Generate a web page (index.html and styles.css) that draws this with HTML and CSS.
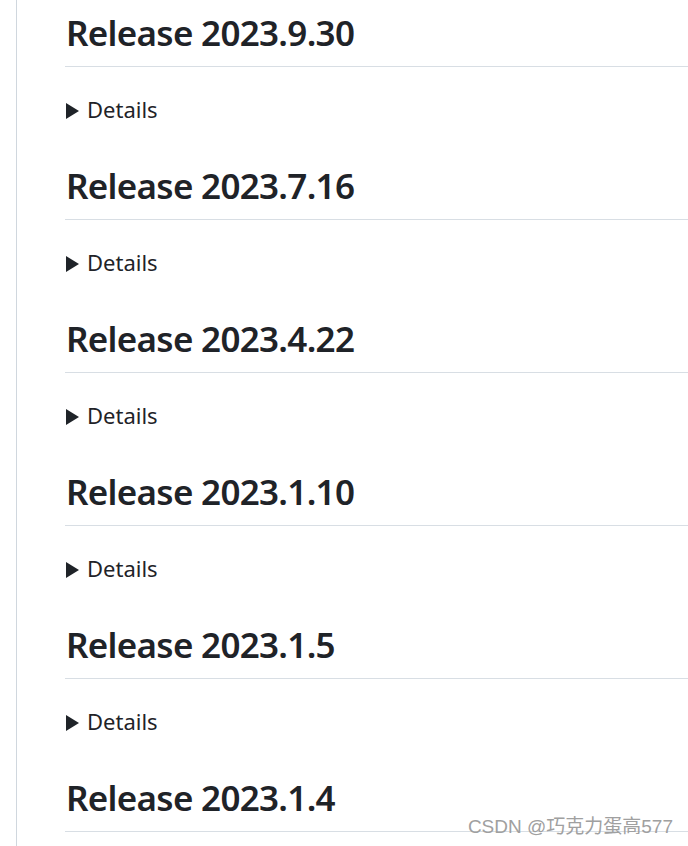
FILE: index.html
```html
<!DOCTYPE html>
<html lang="en">
<head>
<meta charset="utf-8">
<title>Releases</title>
<link rel="stylesheet" href="styles.css">
</head>
<body>
<div class="page">
  <div class="content">
    <section class="release">
      <h2 class="release-title">Release 2023.9.30</h2>
      <details class="release-details"><summary>Details</summary></details>
    </section>
    <section class="release">
      <h2 class="release-title">Release 2023.7.16</h2>
      <details class="release-details"><summary>Details</summary></details>
    </section>
    <section class="release">
      <h2 class="release-title">Release 2023.4.22</h2>
      <details class="release-details"><summary>Details</summary></details>
    </section>
    <section class="release">
      <h2 class="release-title">Release 2023.1.10</h2>
      <details class="release-details"><summary>Details</summary></details>
    </section>
    <section class="release">
      <h2 class="release-title">Release 2023.1.5</h2>
      <details class="release-details"><summary>Details</summary></details>
    </section>
    <section class="release">
      <h2 class="release-title">Release 2023.1.4</h2>
    </section>
  </div>
  <div class="watermark">CSDN @巧克力蛋高577</div>
</div>
</body>
</html>
```
FILE: styles.css
```css
html, body {
  margin: 0;
  padding: 0;
  background: #ffffff;
  overflow: hidden;
}
.page {
  position: relative;
  width: 688px;
  height: 846px;
  overflow: hidden;
  font-family: "Noto Sans", "Open Sans", sans-serif;
  color: #1f2328;
}
.content {
  margin-left: 16px;
  border-left: 1px solid #d0d7de;
  padding-left: 48px;
  padding-top: 11px;
  height: 100%;
  box-sizing: border-box;
}
.release-title {
  margin: 0;
  font-size: 35px;
  line-height: 44px;
  font-weight: 600;
  letter-spacing: -0.7px;
  padding-left: 1px;
  padding-bottom: 11px;
  border-bottom: 1px solid #d8dee4;
}
.release-details {
  margin-top: 26px;
  margin-bottom: 38px;
  font-size: 22px;
  line-height: 33px;
}
.release-details summary {
  list-style: none;
  display: flex;
  align-items: center;
  gap: 8px;
  padding-left: 1px;
  cursor: pointer;
}
.release-details summary::-webkit-details-marker {
  display: none;
}
.release-details summary::before {
  content: "";
  width: 0;
  height: 0;
  border-top: 8px solid transparent;
  border-bottom: 8px solid transparent;
  border-left: 13px solid #1f2328;
  margin-top: 2px;
}
.watermark {
  position: absolute;
  right: 15px;
  bottom: 8px;
  font-family: "Liberation Sans", "Noto Sans CJK SC", sans-serif;
  font-size: 19px;
  line-height: 22px;
  color: #a0a0a0;
}
```
